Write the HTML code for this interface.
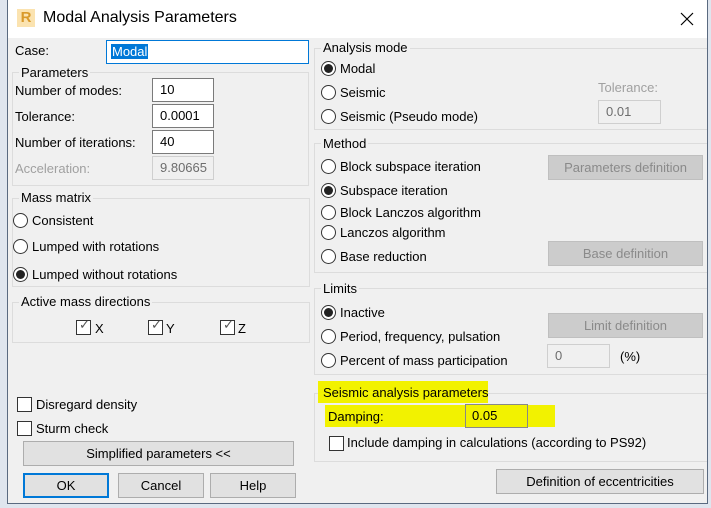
<!DOCTYPE html>
<html><head><style>
*{margin:0;padding:0;box-sizing:border-box}
body{width:711px;height:508px;background:#dfe5ee;position:relative;overflow:hidden;font-family:"Liberation Sans",sans-serif;font-size:13px;color:#000}
.a{position:absolute;white-space:nowrap}
#dlg{position:absolute;left:7px;top:-1px;width:701px;height:505px;background:#f0f0f0;border:1px solid #5a6a80}
#title{position:absolute;left:0;top:0;width:699px;height:38px;background:#fff}
.g{position:absolute;border:1px solid #dcdcdc}
.gl{position:absolute;background:#f0f0f0;padding:0 2px;line-height:14px}
.in{position:absolute;height:24px;background:#fff;border:1px solid #7a7a7a;padding:3px 0 0 7px;line-height:16px}
.dis{background:#f0f0f0;border-color:#cfcfcf;color:#6d6d6d}
.r{position:absolute;width:15px;height:15px;border:1px solid #333;border-radius:50%;background:#fff}
.r.on::after{content:"";position:absolute;left:2px;top:2px;width:9px;height:9px;border-radius:50%;background:#222}
.c{position:absolute;width:15px;height:15px;border:1px solid #333;background:#fff}
.b{position:absolute;height:25px;background:#e1e1e1;border:1px solid #adadad;text-align:center;line-height:23px}
.bd{color:#8a8a8a;background:#cccccc;border-color:#bfbfbf}
.gray{color:#8a8a8a}
</style></head><body>
<div id="dlg">
<div id="title">
 <div class="a" style="left:9px;top:9px;width:18px;height:18px;background:#fbe3b0;color:#d99a2b;font-weight:bold;font-size:15px;line-height:18px;text-align:center">R</div>
 <div class="a" style="left:35px;top:9px;font-size:16px">Modal Analysis Parameters</div>
 <svg class="a" style="left:672px;top:12px" width="14" height="14"><path d="M1 1L13 13M13 1L1 13" stroke="#000" stroke-width="1.2"/></svg>
</div>
</div>
<!-- left -->
<div class="a" style="left:15px;top:43px">Case:</div>
<div class="in" style="left:106px;top:40px;width:203px;border:1px solid #0078d7;padding-left:4px"><span style="background:#0078d7;color:#fff;padding:0 1px">Modal</span></div>

<div class="g" style="left:12px;top:72px;width:297px;height:114px"></div>
<div class="gl" style="left:19px;top:66px">Parameters</div>
<div class="a" style="left:15px;top:83px">Number of modes:</div>
<div class="in" style="left:152px;top:78px;width:62px">10</div>
<div class="a" style="left:15px;top:109px">Tolerance:</div>
<div class="in" style="left:152px;top:104px;width:62px">0.0001</div>
<div class="a" style="left:15px;top:135px">Number of iterations:</div>
<div class="in" style="left:152px;top:130px;width:62px">40</div>
<div class="a gray" style="left:15px;top:161px;color:#a0a0a0">Acceleration:</div>
<div class="in dis" style="left:152px;top:156px;width:62px">9.80665</div>

<div class="g" style="left:12px;top:198px;width:298px;height:89px"></div>
<div class="gl" style="left:19px;top:191px">Mass matrix</div>
<div class="r" style="left:13px;top:213px"></div><div class="a" style="left:32px;top:213px">Consistent</div>
<div class="r" style="left:13px;top:239px"></div><div class="a" style="left:32px;top:239px">Lumped with rotations</div>
<div class="r on" style="left:13px;top:267px"></div><div class="a" style="left:32px;top:267px">Lumped without rotations</div>

<div class="g" style="left:12px;top:302px;width:298px;height:41px"></div>
<div class="gl" style="left:19px;top:295px">Active mass directions</div>
<div class="c" style="left:76px;top:320px"></div><div class="a" style="left:79px;top:317px;color:#555">✓</div><div class="a" style="left:95px;top:321px">X</div>
<div class="c" style="left:148px;top:320px"></div><div class="a" style="left:151px;top:317px;color:#555">✓</div><div class="a" style="left:166px;top:321px">Y</div>
<div class="c" style="left:220px;top:320px"></div><div class="a" style="left:223px;top:317px;color:#555">✓</div><div class="a" style="left:238px;top:321px">Z</div>

<div class="c" style="left:17px;top:397px"></div><div class="a" style="left:36px;top:397px">Disregard density</div>
<div class="c" style="left:17px;top:421px"></div><div class="a" style="left:36px;top:421px">Sturm check</div>
<div class="b" style="left:23px;top:441px;width:271px">Simplified parameters &lt;&lt;</div>
<div class="b" style="left:23px;top:473px;width:86px;border:2px solid #0078d7;line-height:21px">OK</div>
<div class="b" style="left:118px;top:473px;width:86px">Cancel</div>
<div class="b" style="left:210px;top:473px;width:86px">Help</div>

<!-- right -->
<div class="g" style="left:314px;top:48px;width:393px;height:82px;border-right:none"></div>
<div class="gl" style="left:321px;top:41px">Analysis mode</div>
<div class="r on" style="left:321px;top:61px"></div><div class="a" style="left:340px;top:61px">Modal</div>
<div class="r" style="left:321px;top:85px"></div><div class="a" style="left:340px;top:85px">Seismic</div>
<div class="r" style="left:321px;top:109px"></div><div class="a" style="left:340px;top:109px">Seismic (Pseudo mode)</div>
<div class="a" style="left:598px;top:80px;color:#a0a0a0">Tolerance:</div>
<div class="in dis" style="left:598px;top:100px;width:63px">0.01</div>

<div class="g" style="left:314px;top:143px;width:393px;height:130px;border-right:none"></div>
<div class="gl" style="left:321px;top:137px">Method</div>
<div class="r" style="left:321px;top:159px"></div><div class="a" style="left:340px;top:159px">Block subspace iteration</div>
<div class="r on" style="left:321px;top:183px"></div><div class="a" style="left:340px;top:183px">Subspace iteration</div>
<div class="r" style="left:321px;top:205px"></div><div class="a" style="left:340px;top:205px">Block Lanczos algorithm</div>
<div class="r" style="left:321px;top:225px"></div><div class="a" style="left:340px;top:225px">Lanczos algorithm</div>
<div class="r" style="left:321px;top:249px"></div><div class="a" style="left:340px;top:249px">Base reduction</div>
<div class="b bd" style="left:548px;top:155px;width:155px">Parameters definition</div>
<div class="b bd" style="left:548px;top:241px;width:155px">Base definition</div>

<div class="g" style="left:314px;top:288px;width:393px;height:87px;border-right:none"></div>
<div class="gl" style="left:321px;top:282px">Limits</div>
<div class="r on" style="left:321px;top:305px"></div><div class="a" style="left:340px;top:305px">Inactive</div>
<div class="r" style="left:321px;top:329px"></div><div class="a" style="left:340px;top:329px">Period, frequency, pulsation</div>
<div class="r" style="left:321px;top:353px"></div><div class="a" style="left:340px;top:353px">Percent of mass participation</div>
<div class="b bd" style="left:548px;top:313px;width:155px">Limit definition</div>
<div class="in dis" style="left:547px;top:344px;width:63px">0</div>
<div class="a" style="left:620px;top:349px">(%)</div>

<div class="g" style="left:314px;top:393px;width:393px;height:69px;border-right:none"></div>
<div class="a" style="left:318px;top:381px;width:170px;height:22px;background:#f2f200"></div>
<div class="a" style="left:323px;top:385px">Seismic analysis parameters</div>
<div class="a" style="left:325px;top:405px;width:230px;height:22px;background:#f2f200"></div>
<div class="a" style="left:328px;top:409px">Damping:</div>
<div class="a" style="left:465px;top:404px;width:63px;height:24px;border:1px solid #888"></div>
<div class="a" style="left:472px;top:408px">0.05</div>
<div class="c" style="left:329px;top:436px"></div><div class="a" style="left:347px;top:435px">Include damping in calculations (according to PS92)</div>
<div class="b" style="left:496px;top:469px;width:208px">Definition of eccentricities</div>
</body></html>
